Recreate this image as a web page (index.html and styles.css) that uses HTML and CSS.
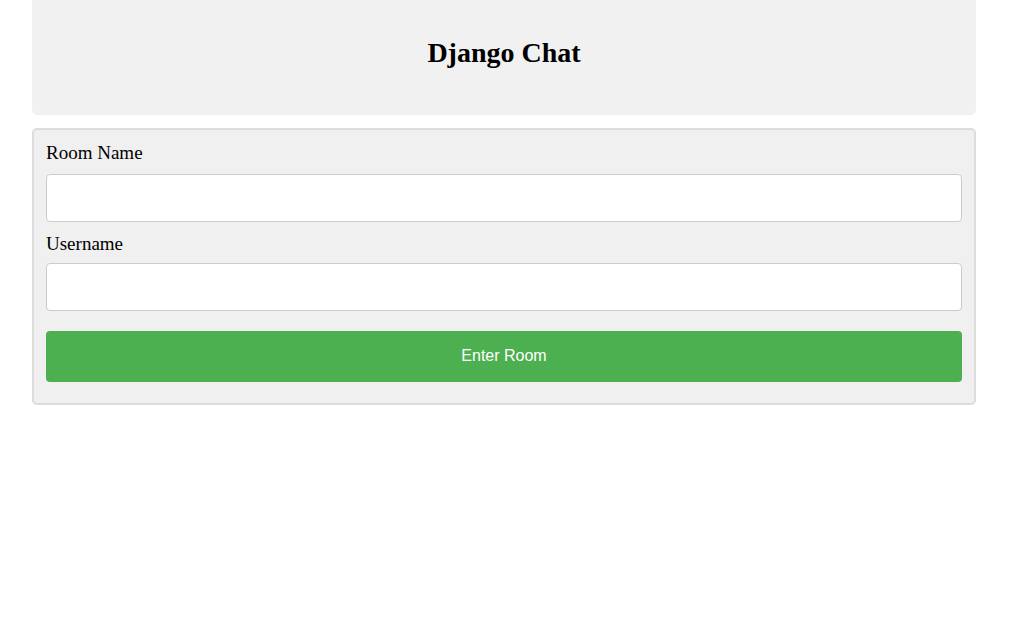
FILE: index.html
```html
<!DOCTYPE html>
<html lang="en">
<head>
<meta charset="utf-8">
<title>Django Chat</title>
<link rel="stylesheet" href="styles.css">
</head>
<body>
<div class="container">
  <header class="header">
    <h1 class="title">Django Chat</h1>
  </header>
  <form class="room-form">
    <label class="field-label" for="room">Room Name</label>
    <input class="field-input" id="room" type="text">
    <label class="field-label field-label-next" for="user">Username</label>
    <input class="field-input" id="user" type="text">
    <button class="enter-btn" type="button">Enter Room</button>
  </form>
</div>
</body>
</html>
```

FILE: styles.css
```css
html, body {
  margin: 0;
  padding: 0;
  background: #ffffff;
}
body {
  font-family: "Liberation Serif", "Times New Roman", serif;
  color: #000;
}
.container {
  width: 944px;
  margin-left: 32px;
  display: flex;
  flex-direction: column;
  gap: 13px;
}
.header {
  background: #f1f1f1;
  height: 115px;
  border-radius: 0 0 5px 5px;
  display: flex;
  align-items: center;
  justify-content: center;
}
.title {
  margin: 0;
  font-size: 28px;
  font-weight: bold;
  line-height: 1.15;
  position: relative;
  top: -4px;
}
.room-form {
  background: #f0f0f0;
  border: 2px solid #dddddd;
  border-radius: 5px;
  padding: 12px 12px 21px;
  display: flex;
  flex-direction: column;
}
.field-label {
  font-size: 19px;
  line-height: 22px;
  margin-bottom: 10px;
}
.field-label-next {
  margin-top: 2px;
  margin-bottom: 8px;
}
.field-input {
  box-sizing: border-box;
  height: 48px;
  border: 1px solid #cccccc;
  border-radius: 4px;
  background: #fff;
  margin-bottom: 9px;
  font-size: 16px;
}
.enter-btn {
  margin-top: 11px;
  height: 51px;
  background: #4caf50;
  color: #ffffff;
  border: none;
  border-radius: 4px;
  font-family: "Liberation Sans", Arial, sans-serif;
  font-size: 16px;
  padding: 0 0 2px;
}
```
